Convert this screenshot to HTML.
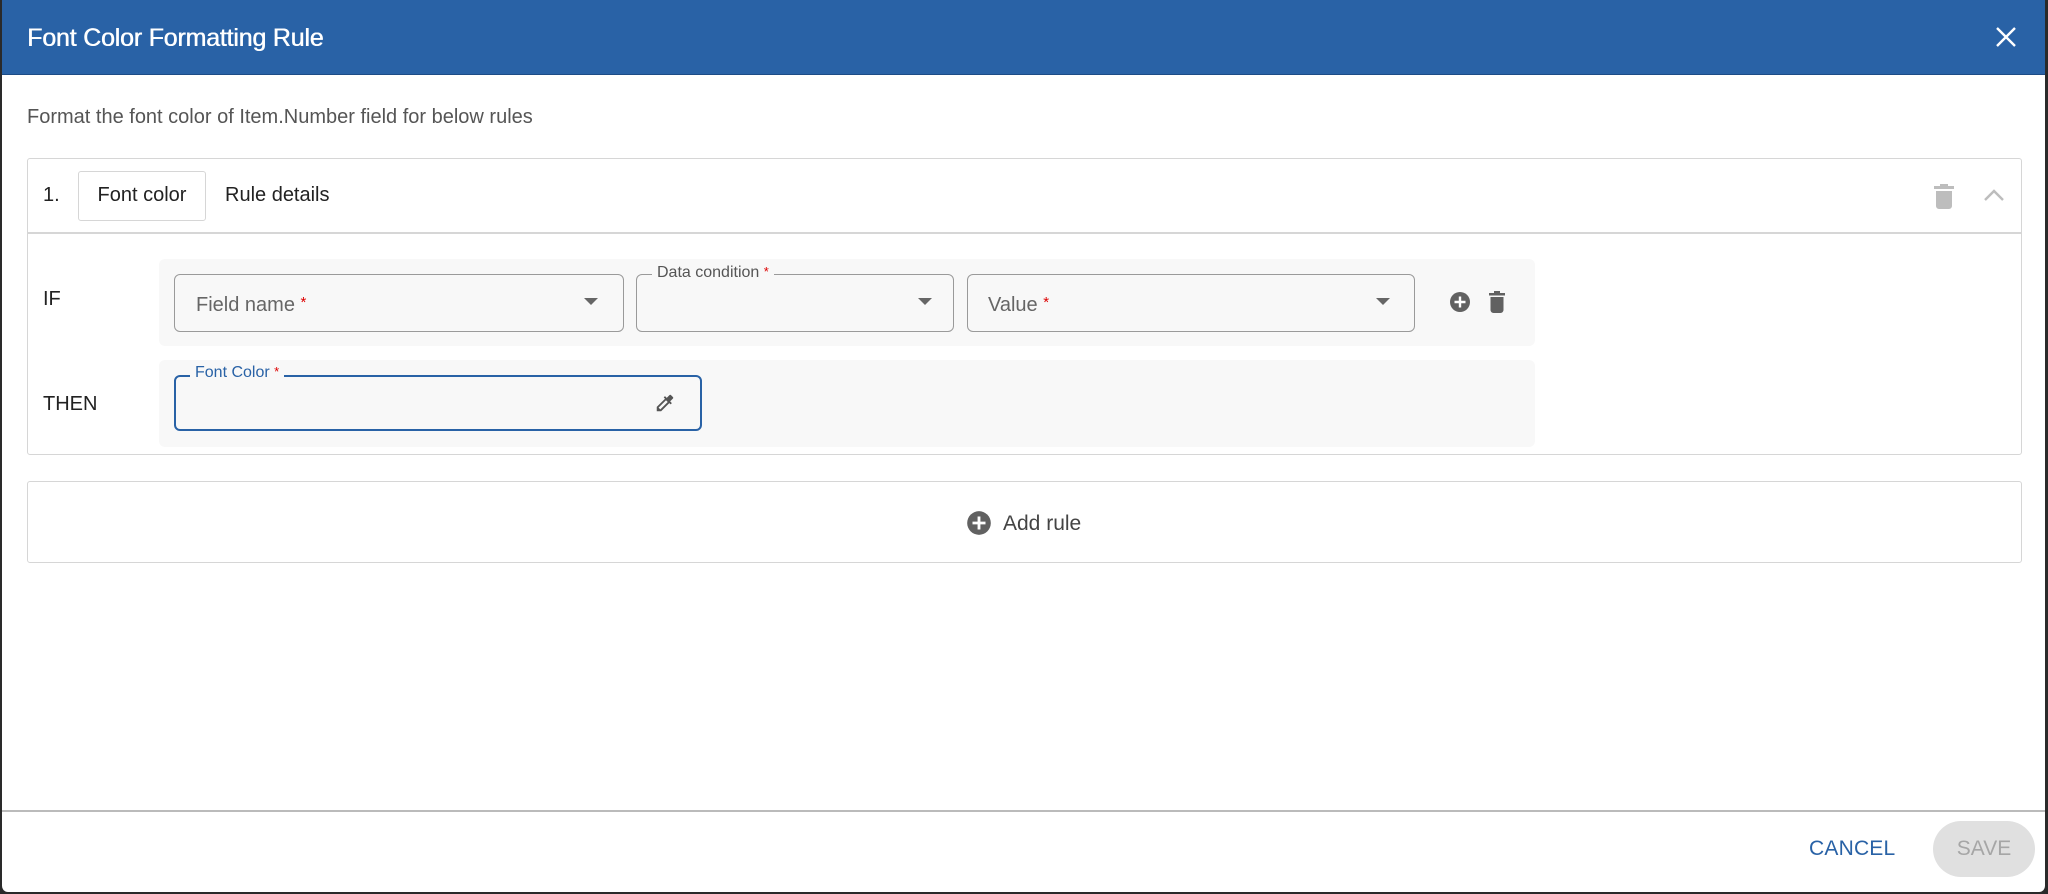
<!DOCTYPE html>
<html><head><meta charset="utf-8"><style>
*{box-sizing:border-box;margin:0;padding:0}
body{width:2048px;height:894px;background:#2a2a2a;font-family:"Liberation Sans",sans-serif;position:relative;overflow:hidden}
.dlg{position:absolute;left:2px;top:0;width:2043px;height:892px;background:#fff;border-radius:0 0 6px 6px;overflow:hidden}
.hd{position:absolute;left:0;top:0;width:100%;height:75px;background:#2962a6;border-bottom:1px solid #1d4c86}
.hd .t{position:absolute;left:25px;top:24px;color:#fff;font-size:25px;font-weight:normal;letter-spacing:-0.2px;text-shadow:0.5px 0 0 #fff}
.a{position:absolute}
.sub{left:25px;top:106px;font-size:20px;color:#555}
.card{left:25px;top:158px;width:1995px;height:297px;border:1.5px solid #d6d6d6;border-radius:3px}
.div{left:25px;top:232px;width:1995px;height:1.5px;background:#d6d6d6}
.chip{left:76px;top:171px;width:128px;height:50px;border:1.5px solid #d6d6d6;border-radius:3px;font-size:20px;color:#222;text-align:center;line-height:47px}
.t20{font-size:20px;color:#222}
.bg{background:#f8f8f8;border-radius:6px}
.fld{border:1.5px solid #9a9a9a;border-radius:6px;background:#f8f8f8}
.ph{font-size:20px;color:#666}
.req{color:#d00;font-size:15px;vertical-align:top}
.arr{width:0;height:0;border-left:7px solid transparent;border-right:7px solid transparent;border-top:7px solid #666}
.lbl{font-size:16px;color:#555;background:#f8f8f8;padding:0 5px}
</style></head><body>
<div class="dlg">
<div class="hd"><div class="t">Font Color Formatting Rule</div>
<svg class="a" style="left:1993px;top:26px" width="22" height="22" viewBox="0 0 22 22"><path d="M2 2L20 20M20 2L2 20" stroke="#fff" stroke-width="2.4"/></svg></div>
<div class="a sub">Format the font color of Item.Number field for below rules</div>
<div class="a card"></div>
<div class="a div"></div>
<div class="a t20" style="left:41px;top:184px">1.</div>
<div class="a chip">Font color</div>
<div class="a t20" style="left:223px;top:184px">Rule details</div>
<svg class="a" style="left:1932px;top:183px" width="20" height="26" viewBox="0 0 20 26"><path d="M6 1h8v2h6v3H0V3h6z M2 8h16v15a3 3 0 0 1-3 3H5a3 3 0 0 1-3-3z" fill="#bdbdbd"/></svg>
<svg class="a" style="left:1981px;top:188px" width="22" height="14" viewBox="0 0 22 14"><path d="M2 12L11 3L20 12" stroke="#bdbdbd" stroke-width="2.4" fill="none"/></svg>

<div class="a bg" style="left:157px;top:259px;width:1376px;height:87px"></div>
<div class="a t20" style="left:41px;top:288px">IF</div>
<div class="a fld" style="left:172px;top:274px;width:450px;height:58px"></div>
<div class="a ph" style="left:194px;top:294px">Field name <span class="req">*</span></div>
<div class="a arr" style="left:582px;top:298px"></div>
<div class="a fld" style="left:634px;top:274px;width:318px;height:58px"></div>
<div class="a lbl" style="left:650px;top:264px">Data condition <span class="req" style="font-size:13px">*</span></div>
<div class="a arr" style="left:916px;top:298px"></div>
<div class="a fld" style="left:965px;top:274px;width:448px;height:58px"></div>
<div class="a ph" style="left:986px;top:294px">Value <span class="req">*</span></div>
<div class="a arr" style="left:1374px;top:298px"></div>
<svg class="a" style="left:1447px;top:291px" width="22" height="22" viewBox="0 0 22 22"><circle cx="11" cy="11" r="10" fill="#616161"/><path d="M11 5.5v11M5.5 11h11" stroke="#fff" stroke-width="2.4"/></svg>
<svg class="a" style="left:1487px;top:291px" width="16" height="22" viewBox="0 0 16 22"><path d="M5 0h6v2h5v2.5H0V2h5z M1.5 6h13v13a3 3 0 0 1-3 3h-7a3 3 0 0 1-3-3z" fill="#616161"/></svg>

<div class="a bg" style="left:157px;top:360px;width:1376px;height:87px"></div>
<div class="a t20" style="left:41px;top:393px">THEN</div>
<div class="a" style="left:172px;top:375px;width:528px;height:56px;border:2.5px solid #2962a6;border-radius:6px;background:#f8f8f8"></div>
<div class="a lbl" style="left:188px;top:364px;color:#2962a6">Font Color <span class="req" style="font-size:13px">*</span></div>
<svg class="a" style="left:652px;top:392px" width="22" height="22" viewBox="0 0 24 24"><path d="M20.7 5.6l-2.3-2.3c-.4-.4-1-.4-1.4 0l-3.1 3.1-1.9-1.9-1.4 1.4 1.4 1.4L3 16.2V21h4.8l8.9-8.9 1.4 1.4 1.4-1.4-1.9-1.9 3.1-3.1c.4-.4.4-1 0-1.5zM6.9 19L5 17.1l8.1-8.1 1.9 1.9L6.9 19z" fill="#555"/></svg>

<div class="a" style="left:25px;top:481px;width:1995px;height:82px;border:1.5px solid #d6d6d6;border-radius:3px"></div>
<svg class="a" style="left:964px;top:510px" width="26" height="26" viewBox="0 0 22 22"><circle cx="11" cy="11" r="10" fill="#616161"/><path d="M11 5.5v11M5.5 11h11" stroke="#fff" stroke-width="2.4"/></svg>
<div class="a" style="left:1001px;top:512px;font-size:21px;color:#444">Add rule</div>

<div class="a" style="left:0;top:810px;width:100%;height:1.5px;background:#bbb"></div>
<div class="a" style="left:1807px;top:837px;font-size:21px;color:#2962a6;letter-spacing:0.2px">CANCEL</div>
<div class="a" style="left:1931px;top:821px;width:102px;height:56px;border-radius:28px;background:#e0e0e0;color:#a6a6a6;font-size:21px;text-align:center;line-height:56px">SAVE</div>
</div>
</body></html>
